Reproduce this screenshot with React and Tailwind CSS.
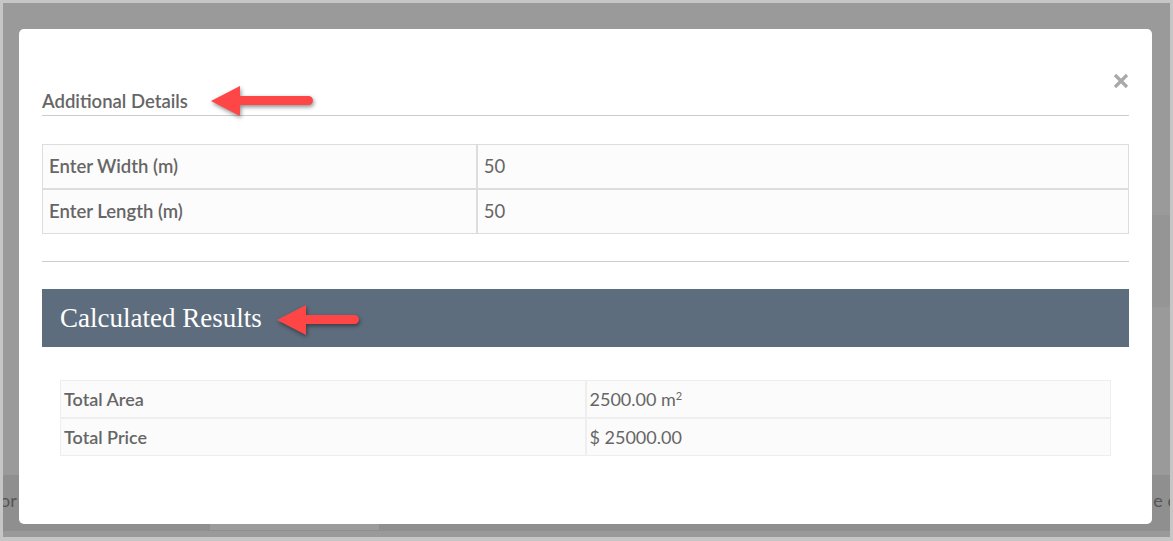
import React from 'react';

function Arrow({ className, length }) {
  // length = shaft length from head back edge to rounded tip
  const end = 36 + length;
  return (
    <svg
      className={className}
      width={end + 12}
      height="45"
      viewBox={`0 0 ${end + 12} 45`}
      style={{ filter: 'drop-shadow(1px 2px 2px rgba(0,0,0,0.45))' }}
    >
      <path d={`M6 21 L35 6 L35 16 L${end - 4.5} 16 A4.5 4.5 0 0 1 ${end - 4.5} 25 L35 25 L35 36 Z`} fill="#ff4646" />
    </svg>
  );
}

function DetailRow({ label, value }) {
  return (
    <div className="grid grid-cols-[40%_60%]">
      <div className="h-[45px] flex items-center px-[6px] border border-[#dddddd] bg-[#fcfcfc] font-semibold">{label}</div>
      <div className="h-[45px] flex items-center px-[6px] border border-[#dddddd] bg-[#fcfcfc]">{value}</div>
    </div>
  );
}

function ResultRow({ label, children }) {
  return (
    <div className="grid grid-cols-2">
      <div className="h-[38px] flex items-center px-[3px] border border-[#eeeeee] bg-[#fbfbfb] font-semibold">{label}</div>
      <div className="h-[38px] flex items-center px-[3px] border border-[#eeeeee] bg-[#fbfbfb]">{children}</div>
    </div>
  );
}

export default function App() {
  return (
    <div className="w-[1173px] h-[541px] bg-[#c6c6c6] pt-[3px] pl-[3px] pr-[3px] pb-[4px]" style={{ fontFamily: 'Lato, "Noto Sans", sans-serif' }}>
      <div className="relative w-full h-full bg-[#9a9a9a] overflow-hidden pt-[26px] pl-[16px]">
        {/* dimmed page behind the modal */}
        <div className="absolute left-0 right-0 top-[472px] bottom-[6px] flex justify-between bg-[#8f8f8f] text-[18px] text-[#555]">
          <span className="ml-[-3px] mt-[12px]">or</span>
          <span className="mr-[-6px] mt-[12px]">e c</span>
        </div>
        <div className="absolute left-[207px] top-[521px] w-[169px] h-[6px] bg-[#9c9c9c]" />
        <div className="absolute left-[1149px] top-[212px] w-[20px] h-[92px] bg-[#959595]" />

        {/* modal */}
        <div className="relative w-[1133px] h-[495px] bg-white rounded-[5px] pt-[44px] px-[23px] text-[#666666] text-[18.5px]">
          <div className="flex justify-end">
            <svg width="16" height="16" viewBox="0 0 16 16">
              <path d="M2 2 L14 14 M14 2 L2 14" stroke="#a9a9a9" strokeWidth="3.2" />
            </svg>
          </div>
          <div className="border-b border-[#cccccc] pb-[1px] text-[18.5px] font-semibold leading-[25px]">Additional Details</div>

          <div className="mt-[28px]">
            <DetailRow label="Enter Width (m)" value="50" />
            <DetailRow label="Enter Length (m)" value="50" />
          </div>

          <div className="mt-[27px] border-t border-[#cccccc]" />

          <div className="mt-[27px] h-[58px] bg-[#5e6d7e] flex items-center px-[18px] text-white text-[27px]" style={{ fontFamily: '"Liberation Serif", serif' }}>
            Calculated Results
          </div>

          <div className="mt-[33px] mx-[18px] text-[18px]">
            <ResultRow label="Total Area">
              2500.00 m<sup className="text-[11px] relative top-[-3px]">2</sup>
            </ResultRow>
            <ResultRow label="Total Price">$ 25000.00</ResultRow>
          </div>

          <Arrow className="absolute left-[186px] top-[51px]" length={72} />
          <Arrow className="absolute left-[252px] top-[270px]" length={52} />
        </div>
      </div>
    </div>
  );
}
